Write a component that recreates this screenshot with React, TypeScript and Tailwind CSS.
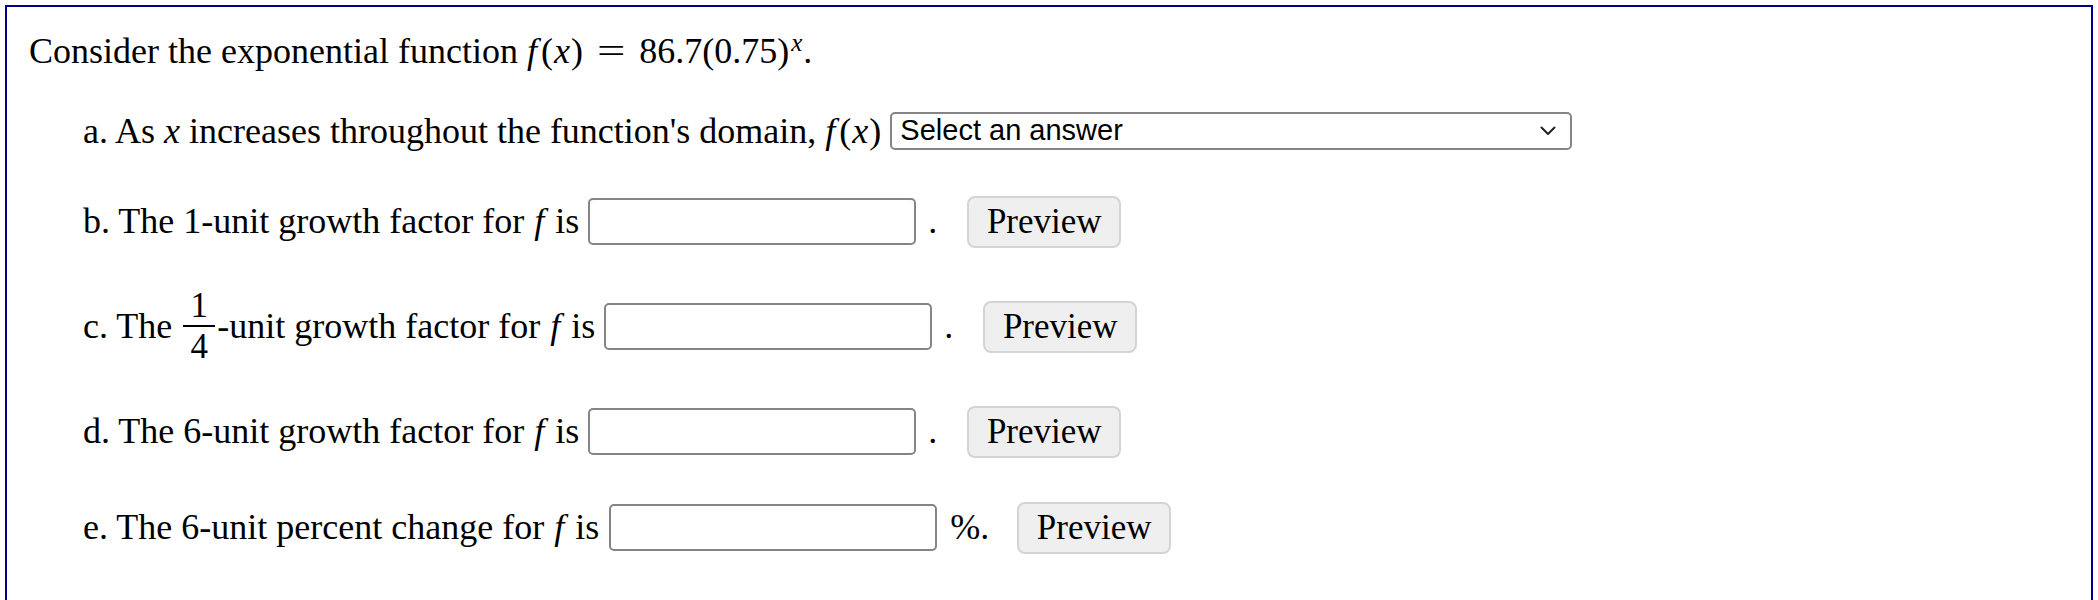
import React from "react";

const serif = { fontFamily: '"Liberation Serif", "Times New Roman", serif' } as React.CSSProperties;

function F() {
  return <span className="italic pl-[1px] pr-[2px]">f</span>;
}

function FX() {
  return (
    <span className="whitespace-nowrap">
      <span className="italic pr-[4px]">f</span>
      <span>(</span>
      <span className="italic px-[1px]">x</span>
      <span>)</span>
    </span>
  );
}

function Input() {
  return (
    <input
      type="text"
      className="h-[47px] w-[328px] rounded-[5px] border-2 border-[#858585] bg-white outline-none"
    />
  );
}

function PreviewBtn() {
  return (
    <button
      className="h-[52px] w-[154px] rounded-[8px] border-2 border-[#d4d4d4] bg-[#efefef] text-[35px] leading-none text-black"
      style={serif}
    >
      Preview
    </button>
  );
}

export default function App() {
  return (
    <div className="min-h-[640px] bg-white" style={serif}>
      <div className="mx-[5px] mt-[5px] border-2 border-[#00008b] pl-[22px] pb-[80px] pt-[24px] text-[36px] text-black">
        <div className="flex h-[40px] items-center whitespace-nowrap">
          <span>Consider the exponential function&nbsp;</span>
          <FX />
          <span className="ml-[18px] mr-[18px] inline-block scale-x-[1.4]">=</span>
          <span>86.7(0.75)</span>
          <sup className="relative -top-[8px] ml-[2px] text-[25px] italic">x</sup>
          <span className="ml-[1px]">.</span>
        </div>

        <div className="ml-[54px] mt-[40px] flex h-[40px] items-center whitespace-nowrap">
          <span>a. As&nbsp;</span>
          <span className="italic">x</span>
          <span>&nbsp;increases throughout the function's domain,&nbsp;</span>
          <FX />
          <div
            className="ml-[9px] flex h-[38px] w-[682px] items-center justify-between rounded-[5px] border-2 border-[#858585] bg-white pl-[8px] pr-[14px] text-[29px] text-black"
            style={{ fontFamily: '"Liberation Sans", Arial, sans-serif' }}
          >
            <span>Select an answer</span>
            <svg width="16" height="10" viewBox="0 0 16 10" fill="none">
              <path d="M1.5 1.5 L8 8 L14.5 1.5" stroke="#222" strokeWidth="2" strokeLinecap="round" strokeLinejoin="round" />
            </svg>
          </div>
        </div>

        <div className="ml-[54px] mt-[43px] flex h-[54px] items-center whitespace-nowrap">
          <span>b. The 1-unit growth factor for&nbsp;</span>
          <F />
          <span>&nbsp;is</span>
          <span className="ml-[9px]"><Input /></span>
          <span className="ml-[12px]">.</span>
          <span className="ml-[30px]"><PreviewBtn /></span>
        </div>

        <div className="ml-[54px] mt-[38px] flex h-[80px] items-center whitespace-nowrap">
          <span>c. The&nbsp;</span>
          <span className="inline-flex flex-col items-center px-[2px] text-[35px] leading-[39px]">
            <span>1</span>
            <span className="h-[2px] w-[32px] bg-black"></span>
            <span>4</span>
          </span>
          <span>-unit growth factor for&nbsp;</span>
          <F />
          <span>&nbsp;is</span>
          <span className="ml-[9px]"><Input /></span>
          <span className="ml-[12px]">.</span>
          <span className="ml-[30px]"><PreviewBtn /></span>
        </div>

        <div className="ml-[54px] mt-[38px] flex h-[54px] items-center whitespace-nowrap">
          <span>d. The 6-unit growth factor for&nbsp;</span>
          <F />
          <span>&nbsp;is</span>
          <span className="ml-[9px]"><Input /></span>
          <span className="ml-[12px]">.</span>
          <span className="ml-[30px]"><PreviewBtn /></span>
        </div>

        <div className="ml-[54px] mt-[42px] flex h-[54px] items-center whitespace-nowrap">
          <span>e. The 6-unit percent change for&nbsp;</span>
          <F />
          <span>&nbsp;is</span>
          <span className="ml-[10px]"><Input /></span>
          <span className="ml-[13px]">%.</span>
          <span className="ml-[28px]"><PreviewBtn /></span>
        </div>
      </div>
    </div>
  );
}
